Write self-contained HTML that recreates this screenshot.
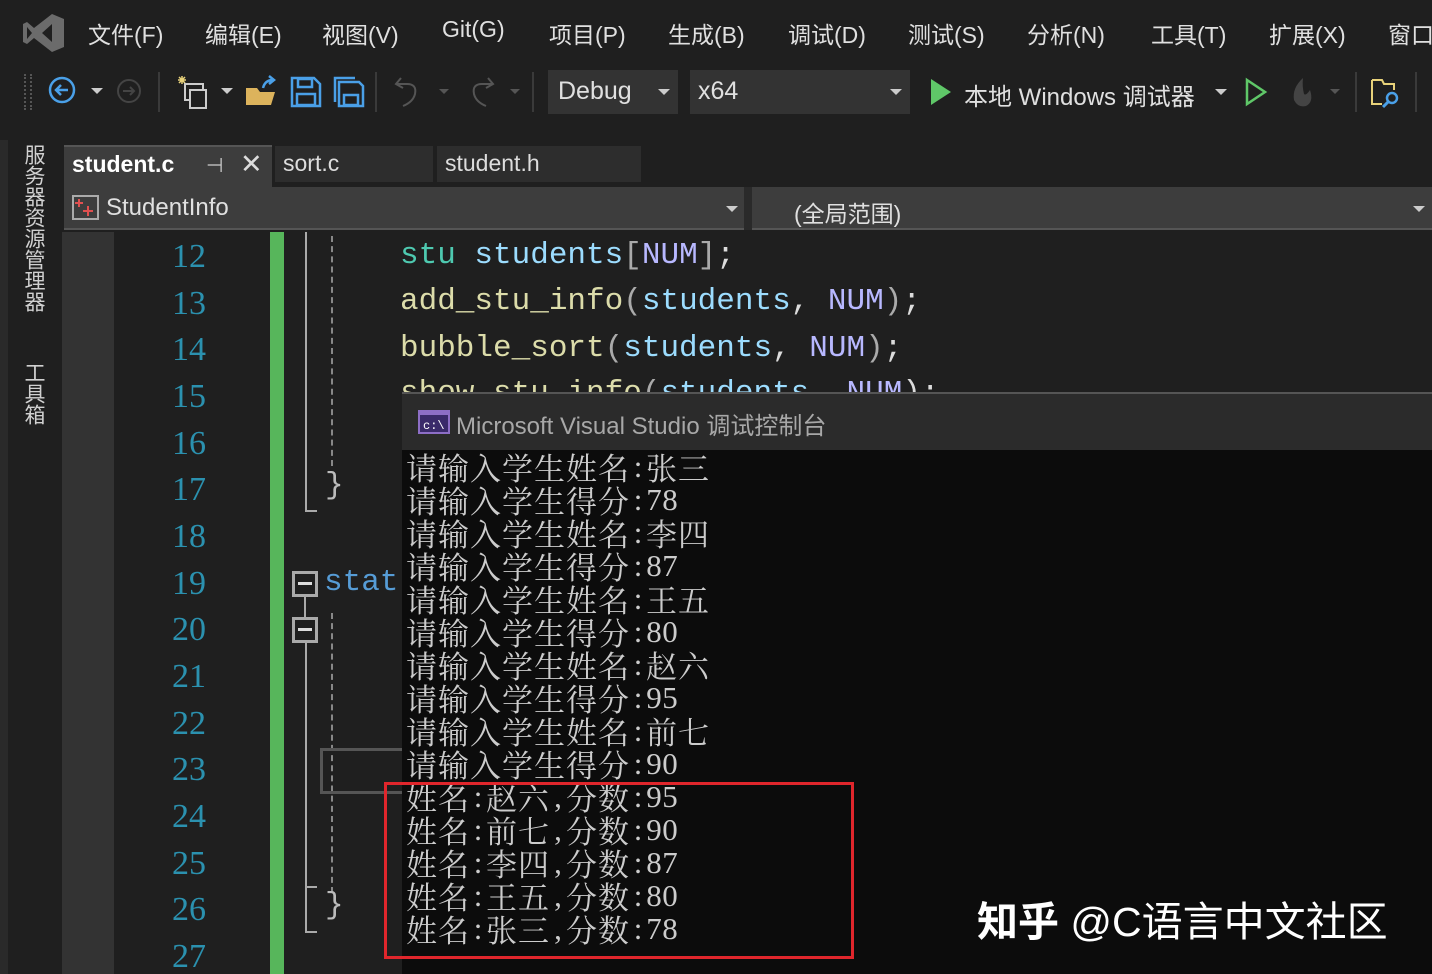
<!DOCTYPE html>
<html><head><meta charset="utf-8"><style>
*{margin:0;padding:0;box-sizing:border-box}
html,body{width:1432px;height:974px;overflow:hidden}
body{background:#1f1f1f;position:relative;font-family:"Liberation Sans","Noto Sans CJK SC",sans-serif;color:#dcdcdc}
.a{position:absolute;white-space:nowrap}
.menu{top:16px;font-size:23px;color:#e0e0e0}
.code{font-family:"Liberation Mono","Noto Serif CJK SC",monospace;font-size:31px}
.ln{font-family:"Liberation Serif",serif;font-size:34px;color:#2b91af;left:172px;width:40px}
.con{font-family:"Noto Serif CJK SC","Liberation Serif",serif;font-size:31px;color:#cccccc;left:406px;top:450px}
.con div{height:33px;line-height:33px;overflow:visible;white-space:nowrap}
.con i,.con b{font-style:normal;font-weight:normal;display:inline-block;height:33px;line-height:33px;vertical-align:top}
.con i{width:16px;text-align:center;font-family:"Liberation Serif",serif}
.con b{width:32px;text-align:left}
.sep{width:2px;height:40px;background:#3a3a3a;top:72px}
</style></head><body>
<svg class="a" style="left:22px;top:12px" width="44" height="42" viewBox="0 0 44 42"><path d="M30 2 L42 7 V35 L30 40 L12 26 L5 32 L1 30 V12 L5 10 L12 16 Z M30 12 L20 21 L30 30 Z M5 15 V27 L10 21 Z" fill="#6b6b6b"/></svg>
<div class="a menu" style="left:88px">文件(F)</div>
<div class="a menu" style="left:205px">编辑(E)</div>
<div class="a menu" style="left:322px">视图(V)</div>
<div class="a menu" style="left:442px">Git(G)</div>
<div class="a menu" style="left:549px">项目(P)</div>
<div class="a menu" style="left:668px">生成(B)</div>
<div class="a menu" style="left:788px">调试(D)</div>
<div class="a menu" style="left:908px">测试(S)</div>
<div class="a menu" style="left:1027px">分析(N)</div>
<div class="a menu" style="left:1151px">工具(T)</div>
<div class="a menu" style="left:1269px">扩展(X)</div>
<div class="a menu" style="left:1388px">窗口</div>
<div class="a" style="left:24px;top:74px;width:8px;height:36px;border-left:2px dotted #555;border-right:2px dotted #555"></div>
<svg class="a" style="left:48px;top:76px" width="30" height="30"><circle cx="14" cy="14" r="12" fill="none" stroke="#4aa0e8" stroke-width="2.5"/><path d="M20 14H9M13 9L8 14L13 19" fill="none" stroke="#4aa0e8" stroke-width="2.5"/></svg>
<div class="a" style="left:91px;top:88px;border:6px solid transparent;border-top:6px solid #ccc"></div>
<svg class="a" style="left:116px;top:78px" width="28" height="28"><circle cx="13" cy="13" r="11" fill="none" stroke="#444" stroke-width="2"/><path d="M7 13H18M14 9L18 13L14 17" fill="none" stroke="#444" stroke-width="2"/></svg>
<div class="a sep" style="left:158px"></div>
<svg class="a" style="left:176px;top:74px" width="36" height="36"><path d="M6 2V10M2 6H10M3 3L9 9M9 3L3 9" stroke="#e8d27a" stroke-width="1.5"/><rect x="9" y="10" width="18" height="16" fill="none" stroke="#ccc" stroke-width="2"/><rect x="14" y="16" width="16" height="18" fill="#1f1f1f" stroke="#ccc" stroke-width="2"/></svg>
<div class="a" style="left:221px;top:88px;border:6px solid transparent;border-top:6px solid #ccc"></div>
<svg class="a" style="left:245px;top:74px" width="34" height="34"><path d="M2 14H12L15 18H30L26 31H2Z" fill="#dcb35c"/><path d="M2 14V31" stroke="#dcb35c" stroke-width="2"/><path d="M18 14Q20 6 28 6M24 2L29 6L24 10" fill="none" stroke="#4aa0e8" stroke-width="2.5"/></svg>
<svg class="a" style="left:290px;top:76px" width="32" height="32"><path d="M2 2H24L30 8V30H2Z" fill="none" stroke="#4aa0e8" stroke-width="2.5"/><rect x="8" y="3" width="14" height="8" fill="none" stroke="#4aa0e8" stroke-width="2.5"/><rect x="7" y="18" width="18" height="11" fill="none" stroke="#4aa0e8" stroke-width="2.5"/></svg>
<svg class="a" style="left:333px;top:76px" width="32" height="32"><path d="M6 6H26L30 10V30H6Z" fill="none" stroke="#4aa0e8" stroke-width="2.5"/><path d="M2 26V2H22" fill="none" stroke="#4aa0e8" stroke-width="2.5"/><rect x="11" y="19" width="14" height="10" fill="none" stroke="#4aa0e8" stroke-width="2.5"/></svg>
<div class="a sep" style="left:375px"></div>
<svg class="a" style="left:393px;top:76px" width="30" height="32"><path d="M8 2L3 8L10 12M3 8H14Q24 8 22 18Q20 26 10 30" fill="none" stroke="#555" stroke-width="2"/></svg>
<div class="a" style="left:439px;top:89px;border:5px solid transparent;border-top:5px solid #555"></div>
<svg class="a" style="left:466px;top:76px" width="30" height="32"><path d="M22 2L27 8L20 12M27 8H16Q6 8 8 18Q10 26 20 30" fill="none" stroke="#555" stroke-width="2"/></svg>
<div class="a" style="left:510px;top:89px;border:5px solid transparent;border-top:5px solid #555"></div>
<div class="a sep" style="left:532px"></div>
<div class="a" style="left:548px;top:70px;width:130px;height:44px;background:#333"></div>
<div class="a" style="left:558px;top:77px;font-size:25px;color:#e0e0e0">Debug</div>
<div class="a" style="left:658px;top:89px;border:6px solid transparent;border-top:6px solid #ccc"></div>
<div class="a" style="left:690px;top:70px;width:220px;height:44px;background:#333"></div>
<div class="a" style="left:698px;top:77px;font-size:25px;color:#e0e0e0">x64</div>
<div class="a" style="left:890px;top:89px;border:6px solid transparent;border-top:6px solid #ccc"></div>
<svg class="a" style="left:929px;top:77px" width="24" height="30"><path d="M2 2L22 15L2 28Z" fill="#5fc768"/></svg>
<div class="a" style="left:964px;top:77px;font-size:24px;color:#e0e0e0">本地 Windows 调试器</div>
<div class="a" style="left:1215px;top:89px;border:6px solid transparent;border-top:6px solid #ccc"></div>
<svg class="a" style="left:1244px;top:77px" width="24" height="30"><path d="M3 3L21 15L3 27Z" fill="none" stroke="#5fc768" stroke-width="2.5"/></svg>
<svg class="a" style="left:1288px;top:76px" width="30" height="34"><path d="M15 2Q4 12 6 24Q10 32 18 30Q26 26 22 14Q18 20 16 18Q14 10 15 2Z" fill="#444"/></svg>
<div class="a" style="left:1330px;top:89px;border:5px solid transparent;border-top:5px solid #555"></div>
<div class="a sep" style="left:1355px"></div>
<svg class="a" style="left:1370px;top:76px" width="34" height="34"><path d="M2 4H12L14 8H24V14M2 4V28H12" fill="none" stroke="#e8d27a" stroke-width="2"/><circle cx="22" cy="22" r="5" fill="none" stroke="#4aa0e8" stroke-width="2.5"/><path d="M18 26L13 31" stroke="#4aa0e8" stroke-width="3"/></svg>
<div class="a sep" style="left:1415px"></div>
<div class="a" style="left:0;top:140px;width:8px;height:834px;background:#2a2a2a"></div>
<div class="a" style="left:20px;top:144px;writing-mode:vertical-rl;font-size:21px;color:#d0d0d0;line-height:26px">服务器资源管理器</div>
<div class="a" style="left:20px;top:362px;writing-mode:vertical-rl;font-size:21px;color:#d0d0d0;line-height:26px">工具箱</div>
<div class="a" style="left:64px;top:145px;width:208px;height:42px;background:#3d3d3d;border-top:2px solid #555"></div>
<div class="a" style="left:72px;top:151px;font-size:23px;font-weight:bold;color:#fff">student.c</div>
<div class="a" style="left:206px;top:153px;font-size:20px;color:#ccc">⊣</div>
<div class="a" style="left:240px;top:149px;font-size:27px;color:#ddd">✕</div>
<div class="a" style="left:275px;top:146px;width:158px;height:36px;background:#2d2d2d"></div>
<div class="a" style="left:283px;top:150px;font-size:23px;color:#ddd">sort.c</div>
<div class="a" style="left:437px;top:146px;width:204px;height:36px;background:#2d2d2d"></div>
<div class="a" style="left:445px;top:150px;font-size:23px;color:#ddd">student.h</div>
<div class="a" style="left:64px;top:187px;width:1368px;height:43px;background:#3d3d3d;border-bottom:2px solid #555"></div>
<div class="a" style="left:744px;top:187px;width:8px;height:43px;background:#2a2a2a"></div>
<svg class="a" style="left:72px;top:195px" width="28" height="26"><rect x="1" y="1" width="25" height="23" fill="none" stroke="#aaa" stroke-width="2"/><path d="M7 4V12M3 8H11M16 11V21M11 16H21" stroke="#e05050" stroke-width="2"/></svg>
<div class="a" style="left:106px;top:194px;font-size:24px;color:#e0e0e0">StudentInfo</div>
<div class="a" style="left:726px;top:206px;border:6px solid transparent;border-top:6px solid #ccc"></div>
<div class="a" style="left:794px;top:195px;font-size:23px;color:#e0e0e0">(全局范围)</div>
<div class="a" style="left:1413px;top:206px;border:6px solid transparent;border-top:6px solid #ccc"></div>
<div class="a" style="left:62px;top:232px;width:52px;height:742px;background:#333"></div>
<div class="a" style="left:270px;top:232px;width:14px;height:742px;background:#57b65b"></div>
<div class="a" style="left:305px;top:232px;width:2px;height:280px;background:#aaa"></div>
<div class="a" style="left:305px;top:510px;width:12px;height:2px;background:#aaa"></div>
<div class="a" style="left:331px;top:236px;height:230px;border-left:2px dashed #888"></div>
<div class="a code" style="left:325px;top:468px;color:#bbb">}</div>
<div class="a" style="left:292px;top:571px;width:26px;height:26px;border:3px solid #aaa"><div style="margin:8px 3px;height:3px;background:#ddd"></div></div>
<div class="a" style="left:304px;top:597px;width:2px;height:20px;background:#aaa"></div>
<div class="a" style="left:292px;top:617px;width:26px;height:26px;border:3px solid #aaa"><div style="margin:8px 3px;height:3px;background:#ddd"></div></div>
<div class="a" style="left:305px;top:643px;width:2px;height:290px;background:#aaa"></div>
<div class="a" style="left:305px;top:931px;width:12px;height:2px;background:#aaa"></div>
<div class="a" style="left:305px;top:886px;width:12px;height:2px;background:#aaa"></div>
<div class="a" style="left:331px;top:613px;height:280px;border-left:2px dashed #888"></div>
<div class="a code" style="left:325px;top:888px;color:#bbb">}</div>
<div class="a" style="left:320px;top:748px;width:90px;height:46px;border:3px solid #555;border-right:none"></div>
<div class="a code" style="left:324px;top:565px;color:#569cd6">stat</div>
<div class="a code" style="left:400px;top:238px"><span style="color:#4ec9b0">stu</span> <span style="color:#9cdcfe">students</span><span style="color:#aaa">[</span><span style="color:#b8b8ff">NUM</span><span style="color:#aaa">]</span>;</div>
<div class="a code" style="left:400px;top:284px"><span style="color:#dcdcaa">add_stu_info</span><span style="color:#aaa">(</span><span style="color:#9cdcfe">students</span>, <span style="color:#b8b8ff">NUM</span><span style="color:#aaa">)</span>;</div>
<div class="a code" style="left:400px;top:331px"><span style="color:#dcdcaa">bubble_sort</span><span style="color:#aaa">(</span><span style="color:#9cdcfe">students</span>, <span style="color:#b8b8ff">NUM</span><span style="color:#aaa">)</span>;</div>
<div class="a code" style="left:400px;top:376px;height:17px;overflow:hidden"><span style="color:#dcdcaa">show_stu_info</span><span style="color:#aaa">(</span><span style="color:#9cdcfe">students</span>, <span style="color:#b8b8ff">NUM</span>);</div>
<div class="a ln" style="top:238px">12</div><div class="a ln" style="top:285px">13</div><div class="a ln" style="top:331px">14</div><div class="a ln" style="top:378px">15</div><div class="a ln" style="top:425px">16</div><div class="a ln" style="top:471px">17</div><div class="a ln" style="top:518px">18</div><div class="a ln" style="top:565px">19</div><div class="a ln" style="top:611px">20</div><div class="a ln" style="top:658px">21</div><div class="a ln" style="top:705px">22</div><div class="a ln" style="top:751px">23</div><div class="a ln" style="top:798px">24</div><div class="a ln" style="top:845px">25</div><div class="a ln" style="top:891px">26</div><div class="a ln" style="top:938px">27</div>
<div class="a" style="left:402px;top:392px;width:1030px;height:58px;background:#2b2b2b;border-top:2px solid #555"></div>
<svg class="a" style="left:418px;top:410px" width="32" height="24"><rect width="32" height="24" fill="#8d6ec6"/><rect x="2" y="5" width="28" height="17" fill="#3a2a6a"/><text x="5" y="19" font-size="12" fill="#fff" font-family="Liberation Mono">c:\</text></svg>
<div class="a" style="left:456px;top:406px;font-size:24px;color:#a8a8a8">Microsoft Visual Studio 调试控制台</div>
<div class="a" style="left:402px;top:450px;width:1030px;height:524px;background:#0c0c0c"></div>
<div class="a con">
<div><b>请</b><b>输</b><b>入</b><b>学</b><b>生</b><b>姓</b><b>名</b><i>:</i><b>张</b><b>三</b></div>
<div><b>请</b><b>输</b><b>入</b><b>学</b><b>生</b><b>得</b><b>分</b><i>:</i><i>7</i><i>8</i></div>
<div><b>请</b><b>输</b><b>入</b><b>学</b><b>生</b><b>姓</b><b>名</b><i>:</i><b>李</b><b>四</b></div>
<div><b>请</b><b>输</b><b>入</b><b>学</b><b>生</b><b>得</b><b>分</b><i>:</i><i>8</i><i>7</i></div>
<div><b>请</b><b>输</b><b>入</b><b>学</b><b>生</b><b>姓</b><b>名</b><i>:</i><b>王</b><b>五</b></div>
<div><b>请</b><b>输</b><b>入</b><b>学</b><b>生</b><b>得</b><b>分</b><i>:</i><i>8</i><i>0</i></div>
<div><b>请</b><b>输</b><b>入</b><b>学</b><b>生</b><b>姓</b><b>名</b><i>:</i><b>赵</b><b>六</b></div>
<div><b>请</b><b>输</b><b>入</b><b>学</b><b>生</b><b>得</b><b>分</b><i>:</i><i>9</i><i>5</i></div>
<div><b>请</b><b>输</b><b>入</b><b>学</b><b>生</b><b>姓</b><b>名</b><i>:</i><b>前</b><b>七</b></div>
<div><b>请</b><b>输</b><b>入</b><b>学</b><b>生</b><b>得</b><b>分</b><i>:</i><i>9</i><i>0</i></div>
<div><b>姓</b><b>名</b><i>:</i><b>赵</b><b>六</b><i>,</i><b>分</b><b>数</b><i>:</i><i>9</i><i>5</i></div>
<div><b>姓</b><b>名</b><i>:</i><b>前</b><b>七</b><i>,</i><b>分</b><b>数</b><i>:</i><i>9</i><i>0</i></div>
<div><b>姓</b><b>名</b><i>:</i><b>李</b><b>四</b><i>,</i><b>分</b><b>数</b><i>:</i><i>8</i><i>7</i></div>
<div><b>姓</b><b>名</b><i>:</i><b>王</b><b>五</b><i>,</i><b>分</b><b>数</b><i>:</i><i>8</i><i>0</i></div>
<div><b>姓</b><b>名</b><i>:</i><b>张</b><b>三</b><i>,</i><b>分</b><b>数</b><i>:</i><i>7</i><i>8</i></div>
</div>
<div class="a" style="left:384px;top:782px;width:470px;height:177px;border:3px solid #e0262c"></div>
<div class="a" style="left:977px;top:888px;font-size:41px;color:#fff;font-weight:bold">知乎 <span style="font-weight:normal">@C语言中文社区</span></div>
</body></html>
